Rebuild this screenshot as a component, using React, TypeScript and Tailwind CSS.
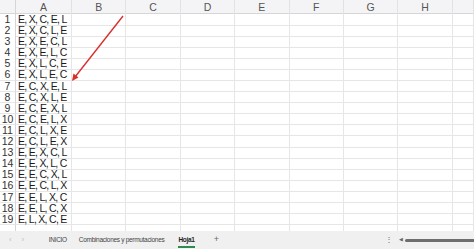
import React from "react";

const rows = [
  "E, X, C, E, L",
  "E, X, C, L, E",
  "E, X, E, C, L",
  "E, X, E, L, C",
  "E, X, L, C, E",
  "E, X, L, E, C",
  "E, C, X, E, L",
  "E, C, X, L, E",
  "E, C, E, X, L",
  "E, C, E, L, X",
  "E, C, L, X, E",
  "E, C, L, E, X",
  "E, E, X, C, L",
  "E, E, X, L, C",
  "E, E, C, X, L",
  "E, E, C, L, X",
  "E, E, L, X, C",
  "E, E, L, C, X",
  "E, L, X, C, E",
  "",
];

const cols = ["A", "B", "C", "D", "E", "F", "G", "H", ""];

const gridCols = "grid grid-cols-[16px_56px_repeat(7,54.4px)_1fr]";

export default function App() {
  return (
    <div
      className="relative w-[474px] h-[249px] overflow-hidden bg-white flex flex-col"
      style={{ fontFamily: '"Liberation Sans", Arial, sans-serif' }}
    >
      {/* column headers */}
      <div className={`${gridCols} h-[14px] shrink-0 bg-[#f4f4f6] border-b border-[#d6d6d6]`}>
        <div className="border-r border-[#d6d6d6]" />
        {cols.map((c, i) => (
          <div
            key={i}
            className="flex items-center justify-center text-[10.5px] text-[#555] border-r border-[#e2e2e2]"
          >
            {c}
          </div>
        ))}
      </div>

      {/* rows */}
      <div className="flex-1 overflow-hidden">
        {rows.map((val, r) => (
          <div key={r} className={`${gridCols} h-[11.1px]`}>
            <div className="flex items-center justify-center text-[10.5px] leading-none text-[#333] bg-white border-r border-[#d6d6d6] border-b border-b-[#e6e6e6]">
              {val ? r + 1 : ""}
            </div>
            <div className="flex items-center pl-[2px] text-[10.5px] leading-none tracking-[-0.7px] text-[#1a1a1a] border-r border-b border-[#e6e6e6] whitespace-nowrap">
              {val}
            </div>
            {cols.slice(1).map((_, i) => (
              <div key={i} className="border-r border-b border-[#e6e6e6]" />
            ))}
          </div>
        ))}
      </div>

      {/* sheet tabs */}
      <div className="h-[18px] shrink-0 bg-[#f0f0f0] flex items-center text-[6.5px] tracking-[-0.3px] text-[#444]">
        <span className="ml-[9px] text-[#bdbdbd] text-[8px]">‹</span>
        <span className="ml-[10px] text-[#bdbdbd] text-[8px]">›</span>
        <span className="ml-[25px]">INICIO</span>
        <span className="ml-[12px]">Combinaciones y permutaciones</span>
        <span className="ml-[14px] relative font-bold text-[#1f1f1f]">
          Hoja1
          <span className="absolute left-0 right-0 -bottom-[3px] h-[1.5px] bg-[#2f8a4f]" />
        </span>
        <span className="ml-[19px] text-[9px] text-[#666]">+</span>
        <span className="ml-auto mr-[7px] text-[8px] text-[#666]">⋮</span>
        <span className="text-[5px] text-[#666]">◀</span>
        <div className="ml-[2px] h-[3px] w-[69px] bg-[#6e6e6e] rounded-l-full" />
      </div>

      {/* annotation arrow */}
      <svg
        className="absolute left-0 top-0 pointer-events-none"
        width="474"
        height="249"
        viewBox="0 0 474 249"
      >
        <line x1="123" y1="16" x2="75" y2="77" stroke="#d9302c" strokeWidth="1.4" />
        <polygon points="72,81 73.5,73.5 78.5,77.5" fill="#d9302c" />
      </svg>
    </div>
  );
}
